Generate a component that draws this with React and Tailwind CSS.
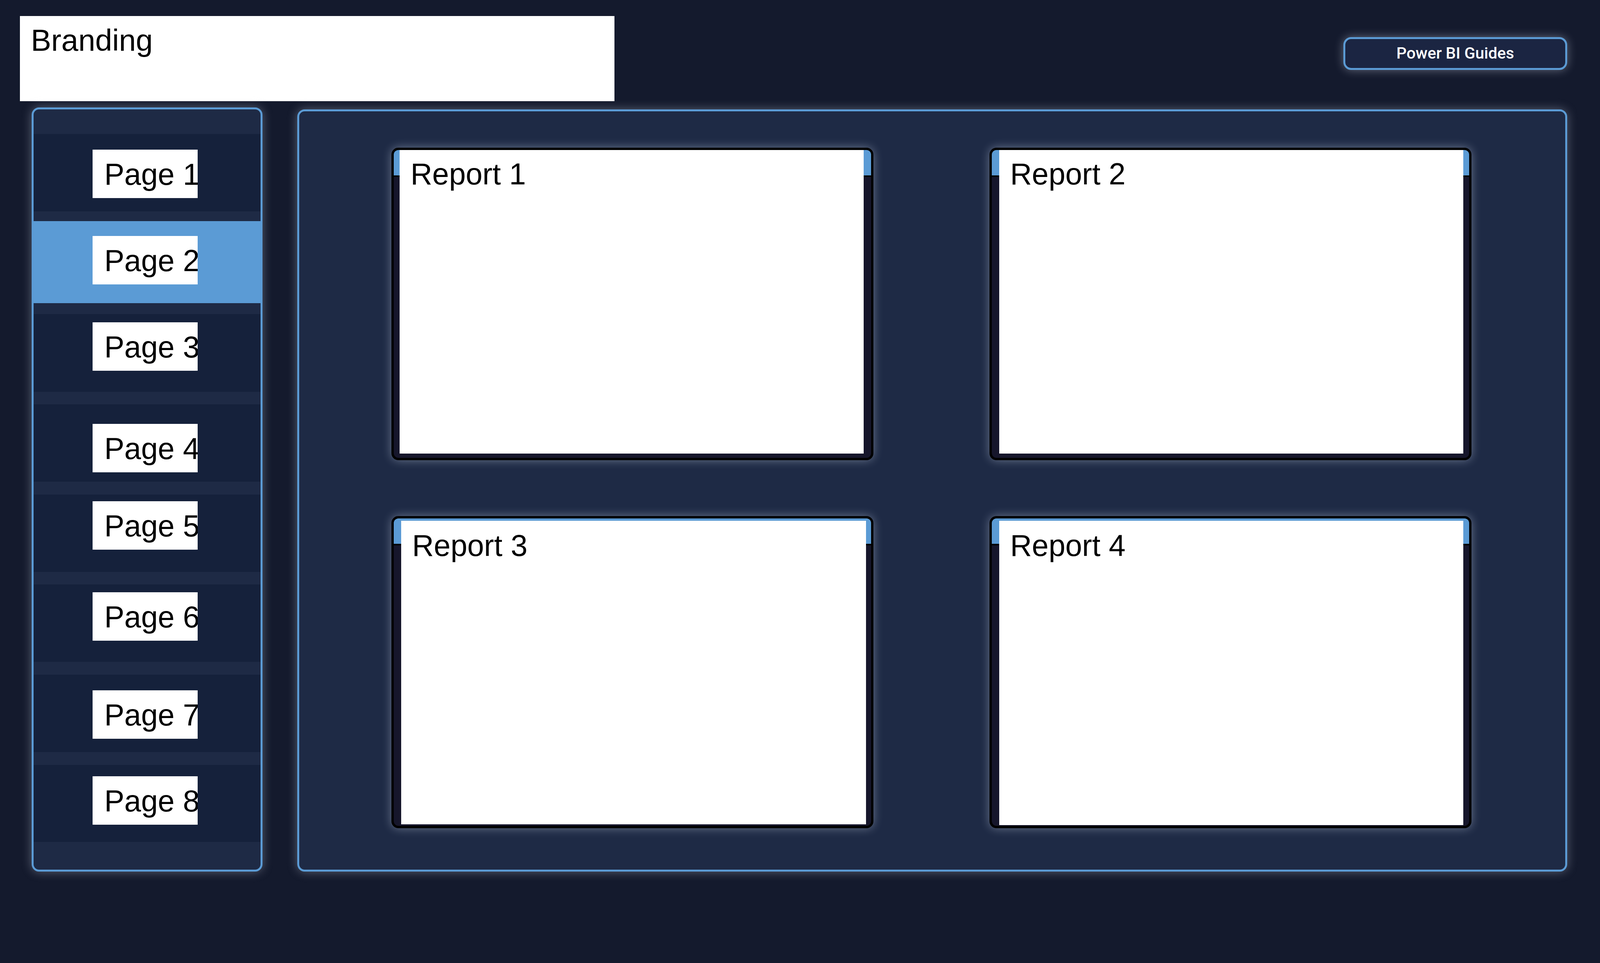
const PAGES = [
  { label: 'Page 1', row: 'mt-[63px] h-[198px] pt-[40px]' },
  { label: 'Page 2', row: 'mt-[25px] h-[210px] pt-[38px]', active: true },
  { label: 'Page 3', row: 'mt-[28px] h-[199px] pt-[21px]' },
  { label: 'Page 4', row: 'mt-[32px] h-[198px] pt-[50px]' },
  { label: 'Page 5', row: 'mt-[33px] h-[198px] pt-[17px]' },
  { label: 'Page 6', row: 'mt-[32px] h-[198px] pt-[20px]' },
  { label: 'Page 7', row: 'mt-[33px] h-[198px] pt-[40px]' },
  { label: 'Page 8', row: 'mt-[33px] h-[197px] pt-[29px]' },
];

const REPORTS = [
  { title: 'Report 1', inset: 'left-[15px] right-[19px] top-0 bottom-[11px]', text: 'pt-[23px]' },
  { title: 'Report 2', inset: 'left-[19px] right-[15px] top-0 bottom-[11px]', text: 'pt-[23px]' },
  { title: 'Report 3', inset: 'left-[19px] right-[13px] top-[6px] bottom-[4px]', text: 'pt-[25px]' },
  { title: 'Report 4', inset: 'left-[19px] right-[15px] top-[6px] bottom-[2px]', text: 'pt-[25px]' },
];

function PageButton({ page }) {
  return (
    <div className={`${page.row} ${page.active ? 'bg-[#5b9bd5]' : 'bg-[#15213b]'}`}>
      <div className="ml-[151px] w-[269px] h-[124px] bg-white overflow-hidden whitespace-nowrap pl-[30px] pt-[25px] text-[77px] leading-none text-black">
        {page.label}
      </div>
    </div>
  );
}

function ReportCard({ report }) {
  return (
    <div className="relative rounded-[18px] border-[6.5px] border-black bg-[#16162b] shadow-[0_0_24px_rgba(200,210,230,0.45)] overflow-hidden">
      <div className="h-[69px] bg-[#5b9bd5] border-b-[4.5px] border-black" />
      <div className={`absolute ${report.inset} bg-white pl-[28px] ${report.text} text-[77px] leading-none text-black whitespace-nowrap`}>
        {report.title}
      </div>
    </div>
  );
}

function App() {
  return (
    <div className="w-screen h-screen overflow-hidden bg-[#141a2d] font-['Liberation_Sans',Arial,sans-serif]">
      <header className="flex items-start justify-between h-[259px] pt-[41px] pl-[51px] pr-[84px]">
        <div className="w-[1522px] h-[218px] bg-white pl-[28px] pt-[23px] text-[78px] leading-none text-black">
          Branding
        </div>
        <button
          type="button"
          className="mt-[54px] w-[573px] h-[84px] flex items-center justify-center rounded-[20px] border-[5.5px] border-[#5b9bd5] bg-[#1b2542] shadow-[0_0_24px_rgba(220,225,240,0.4)] font-['Roboto',sans-serif] font-medium text-[41px] text-white"
        >
          Power BI Guides
        </button>
      </header>

      <div className="flex items-start pt-[16px] pl-[81px]">
        <nav className="w-[591px] h-[1956px] rounded-[19px] border-[5.5px] border-[#5b9bd5] bg-[#1e2a45] shadow-[0_0_26px_rgba(220,225,240,0.35)] overflow-hidden">
          {PAGES.map((page) => (
            <PageButton key={page.label} page={page} />
          ))}
        </nav>

        <main className="ml-[89px] mt-[5px] w-[3251px] h-[1951px] rounded-[19px] border-[5.5px] border-[#5b9bd5] bg-[#1e2a45] shadow-[0_0_26px_rgba(220,225,240,0.35)]">
          <div className="grid grid-cols-[1234px_1234px] grid-rows-[800px_799px] gap-x-[297px] gap-y-[143px] pl-[236px] pt-[93px]">
            {REPORTS.map((report) => (
              <ReportCard key={report.title} report={report} />
            ))}
          </div>
        </main>
      </div>
    </div>
  );
}

export default App;
